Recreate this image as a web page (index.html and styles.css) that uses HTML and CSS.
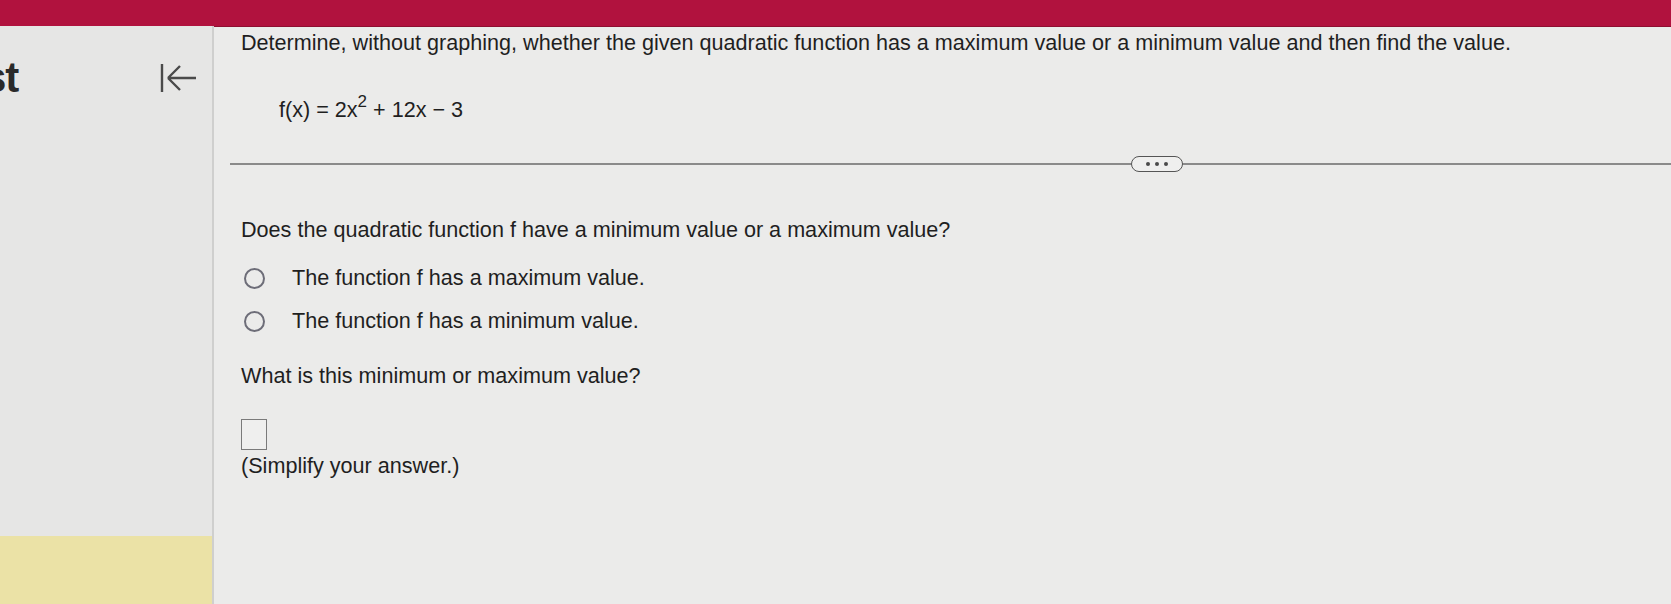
FILE: index.html
```html
<!DOCTYPE html>
<html>
<head>
<meta charset="utf-8">
<link rel="stylesheet" href="styles.css">
</head>
<body>
<div class="topbar"></div>
<div class="page">
  <aside class="sidebar">
    <div class="side-head">
      <span class="side-title">st</span>
      <button class="collapse" aria-label="collapse">
        <svg width="38" height="32" viewBox="0 0 38 32"><path d="M3 2V30M9 16H37M9 16L21 4M9 16L21 28" fill="none" stroke="#4a4a4a" stroke-width="2.4"/></svg>
      </button>
    </div>
    <div class="side-fill"></div>
    <div class="side-note"></div>
  </aside>
  <main class="content">
    <p class="prompt">Determine, without graphing, whether the given quadratic function has a maximum value or a minimum value and then find the value.</p>
    <p class="formula">f(x) = 2x<sup>2</sup> + 12x − 3</p>
    <div class="divider"><span class="more"><i></i><i></i><i></i></span></div>
    <p class="question">Does the quadratic function f have a minimum value or a maximum value?</p>
    <label class="option first"><span class="radio"></span>The function f has a maximum value.</label>
    <label class="option"><span class="radio"></span>The function f has a minimum value.</label>
    <p class="question q2">What is this minimum or maximum value?</p>
    <div class="answer"></div>
    <p class="hint">(Simplify your answer.)</p>
  </main>
</div>
</body>
</html>
```
FILE: styles.css
```css
html, body {
  margin: 0;
  padding: 0;
  height: 100%;
  overflow: hidden;
}
body {
  background: #ebebea;
  font-family: "Liberation Sans", Arial, sans-serif;
  color: #1f1f1f;
  display: flex;
  flex-direction: column;
}
.topbar {
  height: 26px;
  background: #b1123e;
  flex: none;
  box-shadow: 0 1px 0 #8e0f31;
}
.page {
  flex: 1;
  display: flex;
}
.sidebar {
  width: 212px;
  flex: none;
  background: #e6e6e5;
  border-right: 2px solid #cfcfce;
  display: flex;
  flex-direction: column;
}
.side-head {
  display: flex;
  justify-content: space-between;
  align-items: center;
  padding: 36px 15px 0 0;
  height: 32px;
}
.side-title {
  font-size: 42px;
  line-height: 32px;
  font-weight: bold;
  color: #2a2a2a;
  margin-left: -17px;
  letter-spacing: -1px;
}
.collapse {
  border: 0;
  background: none;
  padding: 0;
  display: flex;
}
.side-fill {
  flex: 1;
}
.side-note {
  height: 68px;
  background: #ebe2a6;
}
.content {
  flex: 1;
  padding: 0 0 0 27px;
}
.prompt,
.formula,
.question,
.option,
.hint {
  font-size: 21.6px;
  line-height: 26px;
}
.prompt {
  margin: 4px 0 0;
}
.formula {
  margin: 41px 0 0 38px;
}
.formula sup {
  font-size: 17px;
  line-height: 0;
  position: relative;
  top: -2px;
}
.divider {
  margin: 40px 0 0 -11px;
  height: 2px;
  background: #8a8a8a;
  display: flex;
  align-items: center;
  padding-left: 901px;
}
.more {
  width: 50px;
  height: 14px;
  border: 1.5px solid #555;
  border-radius: 8px;
  background: #efefee;
  display: flex;
  justify-content: center;
  align-items: center;
  gap: 5px;
}
.more i {
  width: 4px;
  height: 4px;
  background: #4a4a4a;
  border-radius: 50%;
}
.question {
  margin: 52px 0 0;
}
.option {
  display: flex;
  align-items: center;
  margin-top: 17px;
}
.option.first {
  margin-top: 22px;
}
.radio {
  width: 17px;
  height: 17px;
  border: 2px solid #6d6d78;
  border-radius: 50%;
  margin: 0 27px 0 3px;
  flex: none;
}
.q2 {
  margin-top: 29px;
}
.answer {
  width: 24px;
  height: 29px;
  border: 1.5px solid #7a7a7a;
  margin-top: 30px;
  background: #efefee;
}
.hint {
  margin: 3px 0 0;
}
```
